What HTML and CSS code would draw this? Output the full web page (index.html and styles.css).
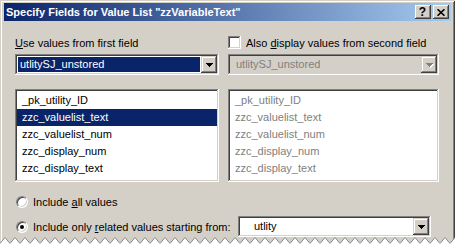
FILE: index.html
```html
<!DOCTYPE html>
<html lang="en">
<head>
    <meta charset="UTF-8">
    <title>Specify Fields for Value List</title>
    <link rel="stylesheet" href="styles.css">
</head>
<body>

    <div class="window">
        <div class="titlebar">
            <span class="title">Specify Fields for Value List "zzVariableText"</span>
            <div class="title-buttons">
                <span class="tbtn">?</span>
                <span class="tbtn">
                    <svg width="8" height="7" viewBox="0 0 8 7"><path d="M0.5 0.2L7.5 6.8M7.5 0.2L0.5 6.8" stroke="#000" stroke-width="1.6"/></svg>
                </span>
            </div>
        </div>

        <div class="client">
            <div class="fields">
                <div class="col">
                    <div class="label-row"><span><u>U</u>se values from first field</span></div>
                    <div class="combo">
                        <span class="combo-text selected">utlitySJ_unstored</span>
                        <span class="drop"><svg width="7" height="4" viewBox="0 0 7 4"><path d="M0 0h7v1h-1v1h-1v1h-1v1h-1v-1h-1v-1h-1v-1h-1z" fill="#000"/></svg></span>
                    </div>
                    <div class="list">
                        <div class="item">_pk_utility_ID</div>
                        <div class="item selected">zzc_valuelist_text</div>
                        <div class="item">zzc_valuelist_num</div>
                        <div class="item">zzc_display_num</div>
                        <div class="item">zzc_display_text</div>
                    </div>
                </div>

                <div class="col">
                    <div class="label-row"><span class="check"></span><span>Also <u>d</u>isplay values from second field</span></div>
                    <div class="combo disabled">
                        <span class="combo-text">utlitySJ_unstored</span>
                        <span class="drop"><svg width="8" height="5" viewBox="0 0 8 5"><path d="M1 1h7v1h-1v1h-1v1h-1v1h-1v-1h-1v-1h-1v-1h-1z" fill="#fff"/><path d="M0 0h7v1h-1v1h-1v1h-1v1h-1v-1h-1v-1h-1v-1h-1z" fill="#808080"/></svg></span>
                    </div>
                    <div class="list disabled">
                        <div class="item">_pk_utility_ID</div>
                        <div class="item">zzc_valuelist_text</div>
                        <div class="item">zzc_valuelist_num</div>
                        <div class="item">zzc_display_num</div>
                        <div class="item">zzc_display_text</div>
                    </div>
                </div>
            </div>

            <div class="options">
                <div class="option">
                    <span class="radio"></span>
                    <span>Include <u>a</u>ll values</span>
                </div>
                <div class="option option-combo">
                    <span class="radio checked"></span>
                    <span class="option-label">Include only <u>r</u>elated values starting from:</span>
                    <div class="combo combo-wide">
                        <span class="combo-text">utlity</span>
                        <span class="drop"><svg width="7" height="4" viewBox="0 0 7 4"><path d="M0 0h7v1h-1v1h-1v1h-1v1h-1v-1h-1v-1h-1v-1h-1z" fill="#000"/></svg></span>
                    </div>
                </div>
            </div>
        </div>

        <!-- torn bottom edge of the screenshot -->
        <svg class="torn" width="455" height="10" viewBox="0 0 455 10">
            <defs>
                <pattern id="zig" width="10" height="10" patternUnits="userSpaceOnUse">
                    <path d="M0 7.5L5 1.5L10 7.5V10H0Z" fill="#fff"/>
                    <path d="M0 7.5L5 1.5L10 7.5" fill="none" stroke="#8a8a8a" stroke-width="1"/>
                </pattern>
            </defs>
            <rect width="455" height="10" fill="url(#zig)"/>
        </svg>
    </div>

</body>
</html>
```

FILE: styles.css
```css
* {
    box-sizing: border-box;
}
body {
    margin: 0;
    background: #fff;
    font-family: "Liberation Sans", Arial, sans-serif;
    font-size: 11px;
    color: #000;
}
u {
    text-decoration: underline;
    text-underline-offset: 1px;
}
.window {
    position: relative;
    width: 455px;
    height: 246px;
    overflow: hidden;
    background: #d4d0c8;
    padding: 3px 4px 0;
    box-shadow: inset 1px 1px #d4d0c8, inset -1px -1px #404040, inset 2px 2px #fff, inset -2px -2px #808080;
}

/* title bar */
.titlebar {
    height: 18px;
    display: flex;
    align-items: center;
    justify-content: space-between;
    padding: 0 2px 0 2px;
    background: linear-gradient(to right, #0a246a, #a6caf0);
}
.title {
    color: #fff;
    font-weight: bold;
    white-space: nowrap;
}
.title-buttons {
    display: flex;
    gap: 2px;
}
.tbtn {
    width: 16px;
    height: 14px;
    display: flex;
    align-items: center;
    justify-content: center;
    padding-right: 1px;
    background: #d4d0c8;
    box-shadow: inset -1px -1px #404040, inset 1px 1px #fff, inset -2px -2px #808080, inset 2px 2px #d4d0c8;
    font-weight: bold;
    font-size: 12px;
    line-height: 14px;
}

/* client area */
.client {
    padding: 15px 0 0 11px;
}
.fields {
    display: grid;
    grid-template-columns: 204px 211px;
    column-gap: 9px;
}
.col {
    display: flex;
    flex-direction: column;
}
.label-row {
    height: 13px;
    display: flex;
    align-items: center;
    gap: 5px;
    white-space: nowrap;
}
.check {
    width: 13px;
    height: 13px;
    flex: none;
    background: #fff;
    box-shadow: inset -1px -1px #fff, inset 1px 1px #808080, inset -2px -2px #d4d0c8, inset 2px 2px #404040;
}

/* combo boxes */
.combo {
    margin-top: 5px;
    height: 21px;
    display: flex;
    padding: 2px;
    background: #fff;
    box-shadow: inset -1px -1px #fff, inset 1px 1px #808080, inset -2px -2px #d4d0c8, inset 2px 2px #404040;
}
.combo-text {
    flex: 1;
    margin: 1px;
    padding-left: 2px;
    line-height: 15px;
    white-space: nowrap;
}
.combo-text.selected {
    background: #0a246a;
    color: #fff;
}
.drop {
    width: 16px;
    height: 17px;
    flex: none;
    display: flex;
    align-items: center;
    justify-content: center;
    padding-top: 1px;
    background: #d4d0c8;
    box-shadow: inset -1px -1px #404040, inset 1px 1px #d4d0c8, inset -2px -2px #808080, inset 2px 2px #fff;
}
.combo.disabled {
    background: #d4d0c8;
    color: #808080;
}
.combo.disabled .combo-text {
    padding-left: 5px;
}
.combo.disabled .drop {
    padding-left: 1px;
}

/* list boxes */
.list {
    margin-top: 14px;
    height: 93px;
    padding: 3px 2px 2px;
    background: #fff;
    box-shadow: inset -1px -1px #fff, inset 1px 1px #808080, inset -2px -2px #d4d0c8, inset 2px 2px #404040;
}
.item {
    height: 17px;
    line-height: 17px;
    padding-left: 5px;
    white-space: nowrap;
}
.item.selected {
    background: #0a246a;
    color: #fff;
}
.list.disabled .item {
    color: #808080;
}

/* radio options */
.options {
    margin-top: 13px;
    padding-left: 1px;
}
.option {
    height: 13px;
    display: flex;
    align-items: center;
    gap: 5px;
    white-space: nowrap;
}
.option-combo {
    margin-top: 8px;
    height: 21px;
}
.option-label {
    width: 200px;
    flex: none;
}
.radio {
    position: relative;
    width: 12px;
    height: 12px;
    flex: none;
    border-radius: 50%;
    background: #fff;
    border: 1px solid;
    border-color: #808080 #fff #fff #808080;
    box-shadow: inset 1px 1px #404040, inset -1px -1px #d4d0c8;
}
.radio.checked::after {
    content: "";
    position: absolute;
    left: 3px;
    top: 3px;
    width: 4px;
    height: 4px;
    border-radius: 50%;
    background: #000;
}
.combo-wide {
    margin-top: 0;
    width: 193px;
    flex: none;
}
.combo-wide .combo-text {
    padding-left: 13px;
}

.torn {
    position: absolute;
    left: 0;
    bottom: 0;
    display: block;
}
```
